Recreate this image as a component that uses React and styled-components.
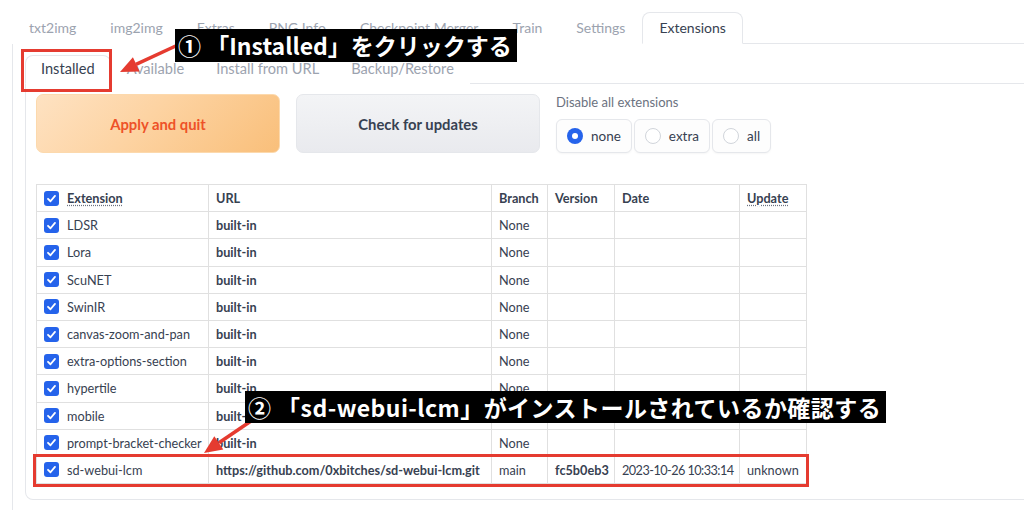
import React from "react";
import styled, { createGlobalStyle } from "styled-components";

const GlobalStyle = createGlobalStyle`
  body {
    margin: 0;
    background: #fff;
    font-family: Lato, "Liberation Sans", sans-serif;
    color: #374151;
  }
`;

const Page = styled.div`
  position: relative;
  width: 1024px;
  height: 510px;
  overflow: hidden;
  padding-top: 12px;
  box-sizing: border-box;
`;

const TabBar = styled.div`
  display: flex;
  margin-left: ${(p) => p.$indent}px;
  height: ${(p) => p.$height}px;
  border-bottom: 1px solid #e5e7eb;
  width: 1200px;
`;

const Tab = styled.div`
  box-sizing: border-box;
  padding: 0 ${(p) => p.$pad || 16}px;
  line-height: ${(p) => p.$height - 2}px;
  font-size: ${(p) => p.$size || 14}px;
  color: ${(p) => (p.$active ? "#374151" : "#9ca3af")};
  border: 1px solid ${(p) => (p.$active ? "#e5e7eb" : "transparent")};
  border-bottom-color: ${(p) => (p.$active ? "#fff" : "transparent")};
  border-radius: 8px 8px 0 0;
  background: #fff;
  margin-bottom: -1px;
  white-space: nowrap;
`;

const OuterPanel = styled.div`
  margin-left: 12px;
  border-left: 1px solid #e5e7eb;
  padding: 11px 0 0 12px;
  height: 480px;
`;

const InnerPanel = styled.div`
  width: 1100px;
  border: 1px solid #e5e7eb;
  border-top: none;
  border-radius: 0 0 0 8px;
  padding: 10px 10px 15px 10px;
`;

const Controls = styled.div`
  display: flex;
  gap: 16px;
  align-items: flex-start;
`;

const BigButton = styled.div`
  width: 244px;
  height: 59px;
  border-radius: 7px;
  display: flex;
  align-items: center;
  justify-content: center;
  font-size: 14.8px;
  font-weight: 700;
  box-sizing: border-box;
  color: ${(p) => (p.$primary ? "#ee5228" : "#374151")};
  background: ${(p) =>
    p.$primary
      ? "linear-gradient(135deg, #fee2c2 0%, #fdd3a2 45%, #f9bf7a 100%)"
      : "linear-gradient(180deg, #f3f4f6 0%, #e9eaee 100%)"};
  border: 1px solid ${(p) => (p.$primary ? "#fcd9ad" : "#e5e7eb")};
`;

const RadioGroup = styled.div`
  display: flex;
  flex-direction: column;
  gap: 9px;
`;

const GroupLabel = styled.div`
  font-size: 13px;
  color: #6b7280;
`;

const RadioRow = styled.div`
  display: flex;
  gap: 2px;
`;

const RadioItem = styled.div`
  display: flex;
  align-items: center;
  gap: 8px;
  height: 34px;
  padding: 0 10px 0 10px;
  box-sizing: border-box;
  border: 1px solid #e5e7eb;
  border-radius: 6px;
  background: #fdfdfd;
  box-shadow: 0 1px 2px rgba(0, 0, 0, 0.04);
  font-size: 13.5px;
  color: #374151;
`;

const RadioDot = styled.span`
  width: 16px;
  height: 16px;
  border-radius: 50%;
  box-sizing: border-box;
  background: ${(p) => (p.$checked ? "#2563eb" : "#fff")};
  border: ${(p) => (p.$checked ? "none" : "1px solid #d1d5db")};
  display: flex;
  align-items: center;
  justify-content: center;
  &::after {
    content: "";
    display: ${(p) => (p.$checked ? "block" : "none")};
    width: 6px;
    height: 6px;
    border-radius: 50%;
    background: #fff;
  }
`;

const Table = styled.table`
  margin-top: 31px;
  border-collapse: collapse;
  table-layout: fixed;
  width: 770px;
  font-size: 12.7px;
  color: #374151;
  th,
  td {
    border: 1px solid #e0e0e0;
    padding: 0 6px 0 7px;
    height: 26.2px;
    text-align: left;
    white-space: nowrap;
    overflow: hidden;
  }
  th {
    font-weight: 700;
  }
`;

const Cell = styled.td`
  font-weight: ${(p) => (p.$bold ? 700 : 400)};
  letter-spacing: ${(p) => (p.$tight ? "-0.55px" : "normal")};
`;

const NameCell = styled.div`
  display: flex;
  align-items: center;
  gap: 8px;
`;

const Check = styled.span`
  width: 15px;
  height: 15px;
  border-radius: 3px;
  background: #2563eb;
  display: inline-flex;
  align-items: center;
  justify-content: center;
  flex-shrink: 0;
`;

const Abbr = styled.span`
  text-decoration: underline dotted #6b7280;
  text-underline-offset: 2px;
`;

const Overlay = styled.svg`
  position: absolute;
  left: 0;
  top: 0;
  pointer-events: none;
`;

const Callout = styled.div`
  position: absolute;
  left: ${(p) => p.$x}px;
  top: ${(p) => p.$y}px;
  height: ${(p) => p.$h}px;
  line-height: ${(p) => p.$h}px;
  padding: 0 5px 0 3px;
  background: #000;
  color: #fff;
  font-family: "Noto Sans CJK JP", sans-serif;
  font-weight: 700;
  font-size: 23px;
  letter-spacing: ${(p) => p.$spacing || 0}px;
  white-space: nowrap;
`;

const RedBox = styled.div`
  position: absolute;
  left: ${(p) => p.$x}px;
  top: ${(p) => p.$y}px;
  width: ${(p) => p.$w}px;
  height: ${(p) => p.$h}px;
  border: 3px solid #e53b30;
  box-sizing: border-box;
`;

const CheckIcon = () => (
  <Check>
    <svg width="11" height="11" viewBox="0 0 12 12">
      <path d="M2.2 6.3 L4.9 9 L9.8 3.2" fill="none" stroke="#fff" strokeWidth="2" strokeLinecap="round" strokeLinejoin="round" />
    </svg>
  </Check>
);

const topTabs = ["txt2img", "img2img", "Extras", "PNG Info", "Checkpoint Merger", "Train", "Settings", "Extensions"];
const innerTabs = ["Installed", "Available", "Install from URL", "Backup/Restore"];

const rows = [
  ["LDSR", "built-in", "None"],
  ["Lora", "built-in", "None"],
  ["ScuNET", "built-in", "None"],
  ["SwinIR", "built-in", "None"],
  ["canvas-zoom-and-pan", "built-in", "None"],
  ["extra-options-section", "built-in", "None"],
  ["hypertile", "built-in", "None"],
  ["mobile", "built-in", "None"],
  ["prompt-bracket-checker", "built-in", "None"],
  ["sd-webui-lcm", "https://github.com/0xbitches/sd-webui-lcm.git", "main", "fc5b0eb3", "2023-10-26 10:33:14", "unknown"],
];

export default function App() {
  return (
    <Page>
      <GlobalStyle />
      <TabBar $indent={12} $height={31}>
        {topTabs.map((t) => (
          <Tab key={t} $height={31} $pad={16} $active={t === "Extensions"}>
            {t}
          </Tab>
        ))}
      </TabBar>
      <OuterPanel>
        <TabBar $indent={0} $height={28}>
          {innerTabs.map((t) => (
            <Tab key={t} $height={28} $pad={15} $size={14.6} $active={t === "Installed"}>
              {t}
            </Tab>
          ))}
        </TabBar>
        <InnerPanel>
          <Controls>
            <BigButton $primary>Apply and quit</BigButton>
            <BigButton>Check for updates</BigButton>
            <RadioGroup>
              <GroupLabel>Disable all extensions</GroupLabel>
              <RadioRow>
                <RadioItem>
                  <RadioDot $checked />
                  none
                </RadioItem>
                <RadioItem>
                  <RadioDot />
                  extra
                </RadioItem>
                <RadioItem>
                  <RadioDot />
                  all
                </RadioItem>
              </RadioRow>
            </RadioGroup>
          </Controls>
          <Table>
            <colgroup>
              <col style={{ width: 172 }} />
              <col style={{ width: 283 }} />
              <col style={{ width: 56 }} />
              <col style={{ width: 67 }} />
              <col style={{ width: 125 }} />
              <col style={{ width: 67 }} />
            </colgroup>
            <thead>
              <tr>
                <th>
                  <NameCell>
                    <CheckIcon />
                    <Abbr>Extension</Abbr>
                  </NameCell>
                </th>
                <th>URL</th>
                <th>Branch</th>
                <th>Version</th>
                <th>Date</th>
                <th>
                  <Abbr>Update</Abbr>
                </th>
              </tr>
            </thead>
            <tbody>
              {rows.map(([name, url, branch, version, date, update]) => (
                <tr key={name}>
                  <Cell>
                    <NameCell>
                      <CheckIcon />
                      {name}
                    </NameCell>
                  </Cell>
                  <Cell $bold>{url}</Cell>
                  <Cell>{branch}</Cell>
                  <Cell $bold>{version}</Cell>
                  <Cell $tight>{date}</Cell>
                  <Cell>{update}</Cell>
                </tr>
              ))}
            </tbody>
          </Table>
        </InnerPanel>
      </OuterPanel>

      <Overlay width="1024" height="510">
        <line x1="180" y1="44" x2="136" y2="64.4" stroke="#e53b30" strokeWidth="3.5" />
        <polygon points="120,72 139.7,71.6 132.9,57.2" fill="#e53b30" />
        <line x1="254" y1="419" x2="219" y2="442.8" stroke="#e53b30" strokeWidth="3.5" />
        <polygon points="204,453 223.3,449.4 214.3,436.2" fill="#e53b30" />
      </Overlay>
      <RedBox $x={21} $y={49} $w={91} $h={43} />
      <RedBox $x={33} $y={454} $w={776} $h={33} />
      <Callout $x={175} $y={29} $h={33}>
        ① 「Installed」をクリックする
      </Callout>
      <Callout $x={245} $y={391} $h={32} $spacing={0.45}>
        ② 「sd-webui-lcm」がインストールされているか確認する
      </Callout>
    </Page>
  );
}
